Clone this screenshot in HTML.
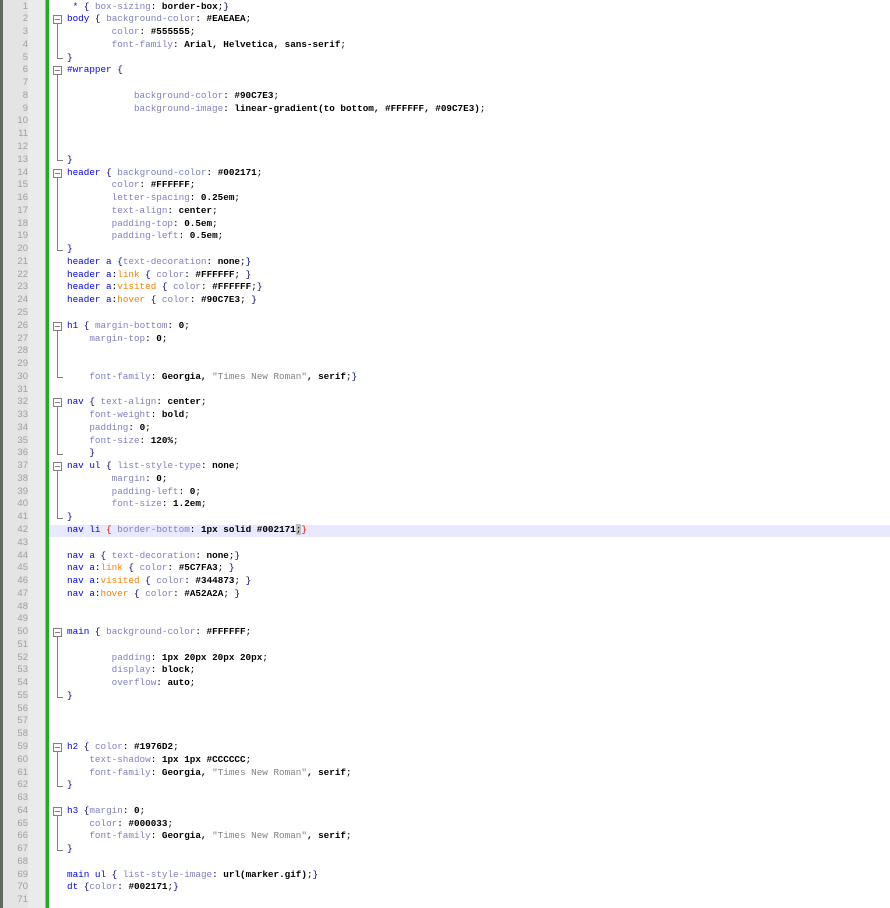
<!DOCTYPE html>
<html><head><meta charset="utf-8"><style>
html,body{margin:0;padding:0;width:890px;height:908px;overflow:hidden;background:#fff;}
.edge{position:absolute;left:0;top:0;width:3px;height:908px;background:#5f6b5c;}
.gut{position:absolute;left:3px;top:0;width:25px;height:908px;background:#e4e4e4;}
.gut2{position:absolute;left:28px;top:0;width:17px;height:908px;background:#ebebeb;}
.gb{position:absolute;left:45px;top:0;width:1px;height:908px;background:#b0b0b0;}
.green{position:absolute;left:46px;top:0;width:3px;height:908px;background:#1fae1f;}
.hl{position:absolute;left:49px;top:524.6px;width:841px;height:12.8px;background:#e8e8ff;}
pre{margin:0;position:absolute;top:0.6px;font-family:"Liberation Mono",monospace;font-size:9.3px;line-height:12.77px;}
.nums{left:3px;width:25px;text-align:right;color:#a0a0a0;font-family:"Liberation Sans",sans-serif;font-size:9.5px;}
.code{left:67px;color:#000;}
.s{color:#0000ff}.p{color:#8080c0}.v{color:#000;font-weight:bold}.o{color:#000080}.c{color:#ff8000}.q{color:#808080}
.r{color:#ff0000}.sel{background:#c0c0c0}
.bx{position:absolute;left:53px;width:7px;height:7px;border:1px solid #808080;background:#fff;}
.bx:after{content:"";position:absolute;left:1px;top:3px;width:5px;height:1px;background:#808080;}
.vl{position:absolute;left:57px;width:1px;background:#808080;}
.hz{position:absolute;left:57px;width:6px;height:1px;background:#808080;}
</style></head><body>
<div class="edge"></div><div class="gut"></div><div class="gut2"></div><div class="gb"></div><div class="green"></div>
<div class="hl"></div>
<pre class="nums">1
2
3
4
5
6
7
8
9
10
11
12
13
14
15
16
17
18
19
20
21
22
23
24
25
26
27
28
29
30
31
32
33
34
35
36
37
38
39
40
41
42
43
44
45
46
47
48
49
50
51
52
53
54
55
56
57
58
59
60
61
62
63
64
65
66
67
68
69
70
71</pre>
<div class="bx" style="top:15.3px"></div><div class="vl" style="top:24.3px;height:33.8px"></div><div class="hz" style="top:58px"></div>
<div class="bx" style="top:66.4px"></div><div class="vl" style="top:75.4px;height:84.8px"></div><div class="hz" style="top:160.2px"></div>
<div class="bx" style="top:168.5px"></div><div class="vl" style="top:177.5px;height:72.1px"></div><div class="hz" style="top:249.6px"></div>
<div class="bx" style="top:321.8px"></div><div class="vl" style="top:330.8px;height:46.5px"></div><div class="hz" style="top:377.3px"></div>
<div class="bx" style="top:398.4px"></div><div class="vl" style="top:407.4px;height:46.5px"></div><div class="hz" style="top:453.9px"></div>
<div class="bx" style="top:462.2px"></div><div class="vl" style="top:471.2px;height:46.6px"></div><div class="hz" style="top:517.8px"></div>
<div class="bx" style="top:628.2px"></div><div class="vl" style="top:637.2px;height:59.4px"></div><div class="hz" style="top:696.6px"></div>
<div class="bx" style="top:743.2px"></div><div class="vl" style="top:752.2px;height:33.8px"></div><div class="hz" style="top:786px"></div>
<div class="bx" style="top:807px"></div><div class="vl" style="top:816px;height:33.8px"></div><div class="hz" style="top:849.8px"></div>
<pre class="code"><span class="s"> *</span> <span class="o">{</span> <span class="p">box-sizing</span>: <span class="v">border-box</span>;<span class="o">}</span>
<span class="s">body</span> <span class="o">{</span> <span class="p">background-color</span>: <span class="v">#EAEAEA</span>;
        <span class="p">color</span>: <span class="v">#555555</span>;
        <span class="p">font-family</span>: <span class="v">Arial, Helvetica, sans-serif</span>;
<span class="o">}</span>
<span class="s">#wrapper</span> <span class="o">{</span>

            <span class="p">background-color</span>: <span class="v">#90C7E3</span>;
            <span class="p">background-image</span>: <span class="v">linear-gradient(to bottom, #FFFFFF, #09C7E3)</span>;



<span class="o">}</span>
<span class="s">header</span> <span class="o">{</span> <span class="p">background-color</span>: <span class="v">#002171</span>;
        <span class="p">color</span>: <span class="v">#FFFFFF</span>;
        <span class="p">letter-spacing</span>: <span class="v">0.25em</span>;
        <span class="p">text-align</span>: <span class="v">center</span>;
        <span class="p">padding-top</span>: <span class="v">0.5em</span>;
        <span class="p">padding-left</span>: <span class="v">0.5em</span>;
<span class="o">}</span>
<span class="s">header a</span> <span class="o">{</span><span class="p">text-decoration</span>: <span class="v">none</span>;<span class="o">}</span>
<span class="s">header a</span>:<span class="c">link</span> <span class="o">{</span> <span class="p">color</span>: <span class="v">#FFFFFF</span>; <span class="o">}</span>
<span class="s">header a</span>:<span class="c">visited</span> <span class="o">{</span> <span class="p">color</span>: <span class="v">#FFFFFF</span>;<span class="o">}</span>
<span class="s">header a</span>:<span class="c">hover</span> <span class="o">{</span> <span class="p">color</span>: <span class="v">#90C7E3</span>; <span class="o">}</span>

<span class="s">h1</span> <span class="o">{</span> <span class="p">margin-bottom</span>: <span class="v">0</span>;
    <span class="p">margin-top</span>: <span class="v">0</span>;


    <span class="p">font-family</span>: <span class="v">Georgia, </span><span class="q">"Times New Roman"</span><span class="v">, serif</span>;<span class="o">}</span>

<span class="s">nav</span> <span class="o">{</span> <span class="p">text-align</span>: <span class="v">center</span>;
    <span class="p">font-weight</span>: <span class="v">bold</span>;
    <span class="p">padding</span>: <span class="v">0</span>;
    <span class="p">font-size</span>: <span class="v">120%</span>;
    <span class="o">}</span>
<span class="s">nav ul</span> <span class="o">{</span> <span class="p">list-style-type</span>: <span class="v">none</span>;
        <span class="p">margin</span>: <span class="v">0</span>;
        <span class="p">padding-left</span>: <span class="v">0</span>;
        <span class="p">font-size</span>: <span class="v">1.2em</span>;
<span class="o">}</span>
<span class="s">nav li</span> <span class="r">{</span> <span class="p">border-bottom</span>: <span class="v">1px solid #002171</span><span class="sel">;</span><span class="r">}</span>

<span class="s">nav a</span> <span class="o">{</span> <span class="p">text-decoration</span>: <span class="v">none</span>;<span class="o">}</span>
<span class="s">nav a</span>:<span class="c">link</span> <span class="o">{</span> <span class="p">color</span>: <span class="v">#5C7FA3</span>; <span class="o">}</span>
<span class="s">nav a</span>:<span class="c">visited</span> <span class="o">{</span> <span class="p">color</span>: <span class="v">#344873</span>; <span class="o">}</span>
<span class="s">nav a</span>:<span class="c">hover</span> <span class="o">{</span> <span class="p">color</span>: <span class="v">#A52A2A</span>; <span class="o">}</span>


<span class="s">main</span> <span class="o">{</span> <span class="p">background-color</span>: <span class="v">#FFFFFF</span>;

        <span class="p">padding</span>: <span class="v">1px 20px 20px 20px</span>;
        <span class="p">display</span>: <span class="v">block</span>;
        <span class="p">overflow</span>: <span class="v">auto</span>;
<span class="o">}</span>



<span class="s">h2</span> <span class="o">{</span> <span class="p">color</span>: <span class="v">#1976D2</span>;
    <span class="p">text-shadow</span>: <span class="v">1px 1px #CCCCCC</span>;
    <span class="p">font-family</span>: <span class="v">Georgia, </span><span class="q">"Times New Roman"</span><span class="v">, serif</span>;
<span class="o">}</span>

<span class="s">h3</span> <span class="o">{</span><span class="p">margin</span>: <span class="v">0</span>;
    <span class="p">color</span>: <span class="v">#000033</span>;
    <span class="p">font-family</span>: <span class="v">Georgia, </span><span class="q">"Times New Roman"</span><span class="v">, serif</span>;
<span class="o">}</span>

<span class="s">main ul</span> <span class="o">{</span> <span class="p">list-style-image</span>: <span class="v">url(marker.gif)</span>;<span class="o">}</span>
<span class="s">dt</span> <span class="o">{</span><span class="p">color</span>: <span class="v">#002171</span>;<span class="o">}</span>
</pre>
</body></html>
